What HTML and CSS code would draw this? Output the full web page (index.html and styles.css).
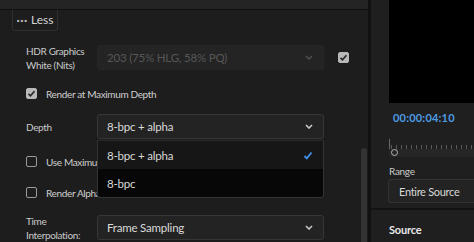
FILE: index.html
```html
<!DOCTYPE html>
<html lang="en">
  <head>
    <meta charset="UTF-8" />
    <title>Export Settings</title>
    <link rel="stylesheet" href="styles.css">
  </head>
  <body>
    <div class="settings">
      <div class="topbar"></div>
      <div class="less-row">
        <button class="less-btn"><span class="dots">&middot;&middot;&middot;</span> Less</button>
      </div>

      <div class="row hdr-row">
        <div class="label two-line">HDR Graphics<br />White (Nits)</div>
        <div class="select disabled">
          <span>203 (75% HLG, 58% PQ)</span>
          <svg class="chev" width="8" height="5" viewBox="0 0 8 5"><path d="M1 1l3 3 3-3" /></svg>
        </div>
        <span class="box checked side"><svg width="9" height="9" viewBox="0 0 9 9"><path d="M1.5 4.8l2 2 4-4.6" /></svg></span>
      </div>

      <div class="row check-row r-max">
        <span class="box checked"><svg width="9" height="9" viewBox="0 0 9 9"><path d="M1.5 4.8l2 2 4-4.6" /></svg></span>
        <span class="check-text">Render at Maximum Depth</span>
      </div>

      <div class="row r-depth">
        <div class="label">Depth</div>
        <div class="select">
          <span>8-bpc + alpha</span>
          <svg class="chev" width="8" height="5" viewBox="0 0 8 5"><path d="M1 1l3 3 3-3" /></svg>
        </div>
      </div>

      <!-- the open menu covers the rest of these two labels -->
      <div class="row check-row r-use">
        <span class="box"></span>
        <span class="check-text">Use Maximum</span>
      </div>

      <div class="row check-row r-alpha">
        <span class="box"></span>
        <span class="check-text">Render Alpha</span>
      </div>

      <div class="row r-time">
        <div class="label two-line">Time<br />Interpolation:</div>
        <div class="select">
          <span>Frame Sampling</span>
          <svg class="chev" width="8" height="5" viewBox="0 0 8 5"><path d="M1 1l3 3 3-3" /></svg>
        </div>
      </div>

      <!-- open dropdown for Depth -->
      <div class="menu">
        <div class="menu-item selected">
          <span>8-bpc + alpha</span>
          <svg class="tick" width="10" height="9" viewBox="0 0 10 9"><path d="M1.5 5l2.3 2.3L8.5 1.5" /></svg>
        </div>
        <div class="menu-item hover">8-bpc</div>
      </div>

      <div class="scrollbar"></div>
    </div>

    <div class="divider"></div>

    <div class="preview-panel">
      <div class="monitor"></div>
      <div class="timecode">00:00:04:10</div>
      <div class="ruler">
        <div class="ticks"></div>
        <div class="track"><span class="playhead"></span></div>
      </div>
      <div class="range-label">Range</div>
      <div class="range-select">Entire Source</div>
      <div class="hline"></div>
      <div class="source-title">Source</div>
    </div>
  </body>
</html>
```

FILE: styles.css
```css
body {
  margin: 0;
  width: 474px;
  height: 242px;
  overflow: hidden;
  display: flex;
  background-color: #1e1e1e;
  font-family: Lato, sans-serif;
  color: #cfcfcf;
}
.settings {
  position: relative;
  width: 368px;
  height: 242px;
  overflow: hidden;
  flex: none;
  background-color: #1d1d1d;
}
.topbar {
  height: 9px;
  background-color: #242424;
  border-bottom: 1px solid #101010;
}
.less-row {
  padding-left: 12px;
}
.less-btn {
  display: block;
  height: 21px;
  width: 46px;
  padding: 0 0 2px 0;
  background-color: #1d1d1d;
  border: 1px solid #2f2f2f;
  border-top: none;
  border-radius: 0 0 3px 3px;
  color: #d4d4d4;
  font-family: inherit;
  font-size: 12px;
}
.dots {
  font-weight: bold;
  letter-spacing: 0.5px;
  color: #bdbdbd;
}
.row {
  display: flex;
  align-items: center;
  height: 25px;
  padding-left: 26px;
}
.hdr-row { margin-top: 14px; }
.r-max { margin-top: 11px; }
.r-depth { margin-top: 8px; }
.r-use { margin-top: 10px; }
.r-alpha { margin-top: 6px; }
.r-time { margin-top: 10px; }
.label {
  width: 71px;
  font-size: 10px;
  letter-spacing: -0.35px;
  color: #c9c9c9;
}
.two-line {
  line-height: 14px;
}
.select {
  display: flex;
  align-items: center;
  justify-content: space-between;
  box-sizing: border-box;
  width: 227px;
  height: 25px;
  padding: 0 10px 0 9px;
  background-color: #232323;
  border: 1px solid #363636;
  border-radius: 3px;
  font-size: 11.5px;
  letter-spacing: -0.2px;
  color: #dadada;
}
.select.disabled {
  background-color: #242424;
  border-color: #262626;
  color: #575757;
}
.chev {
  fill: none;
  stroke: #c8c8c8;
  stroke-width: 1.6;
}
.disabled .chev {
  stroke: #4e4e4e;
}
.box {
  display: flex;
  align-items: center;
  justify-content: center;
  flex: none;
  box-sizing: border-box;
  width: 11px;
  height: 11px;
  border: 1.5px solid #9a9a9a;
  border-radius: 2px;
}
.box.checked {
  background-color: #b8b8b8;
  border-color: #b8b8b8;
}
.box svg {
  fill: none;
  stroke: #2a2a2a;
  stroke-width: 1.7;
}
.box.side {
  margin-left: 14px;
}
.check-text {
  margin-left: 9px;
  font-size: 10px;
  letter-spacing: -0.35px;
  color: #cfcfcf;
  white-space: nowrap;
}
.menu {
  position: absolute;
  left: 97px;
  top: 140px;
  width: 227px;
  box-sizing: border-box;
  border: 1px solid #333;
  border-top-color: #2a2a2a;
  border-radius: 0 0 3px 3px;
  overflow: hidden;
  font-size: 11.5px;
  letter-spacing: -0.2px;
  color: #d8d8d8;
}
.menu-item {
  display: flex;
  align-items: center;
  justify-content: space-between;
  height: 28px;
  padding: 0 10px 0 9px;
}
.menu-item.selected {
  background-color: #161616;
}
.menu-item.hover {
  background-color: #070707;
}
.tick {
  fill: none;
  stroke: #3f8fe6;
  stroke-width: 1.8;
}
.scrollbar {
  position: absolute;
  left: 361px;
  top: 148px;
  width: 6px;
  height: 100px;
  border-radius: 3px;
  background-color: #333;
}
.divider {
  width: 3px;
  flex: none;
  background-color: #111;
}
.preview-panel {
  flex: 1;
  padding-left: 18px;
  background-color: #1f1f1f;
}
.monitor {
  height: 103px;
  background-color: #000;
}
.timecode {
  margin-top: 8px;
  padding-left: 4px;
  font-size: 11px;
  font-weight: bold;
  color: #4d9be4;
  letter-spacing: 0.2px;
}
.ruler {
  margin-top: 15px;
  height: 18px;
}
.ticks {
  height: 10px;
  background-image: linear-gradient(to right, #5a5a5a 1px, transparent 1px);
  background-size: 5px 4px;
  background-position: 1px 6px;
  background-repeat: repeat-x;
  border-left: 1px solid #6a6a6a;
}
.track {
  position: relative;
  height: 8px;
  background-color: #262626;
}
.playhead {
  position: absolute;
  left: 2px;
  top: 0;
  box-sizing: border-box;
  width: 7px;
  height: 7px;
  border: 1.5px solid #b5b5b5;
  border-radius: 50%;
}
.range-label {
  margin-top: 8px;
  font-size: 10px;
  letter-spacing: -0.3px;
  color: #c9c9c9;
}
.range-select {
  box-sizing: border-box;
  height: 24px;
  margin-top: 2px;
  margin-left: -1px;
  padding: 5px 0 0 10px;
  background-color: #232323;
  border: 1px solid #333;
  border-right: none;
  border-radius: 3px 0 0 3px;
  font-size: 11px;
  letter-spacing: -0.3px;
  color: #d8d8d8;
}
.hline {
  height: 2px;
  margin-top: 5px;
  margin-left: -18px;
  background-color: #121212;
}
.source-title {
  margin-top: 13px;
  font-size: 11px;
  font-weight: bold;
  letter-spacing: -0.2px;
  color: #e8e8e8;
}
```
